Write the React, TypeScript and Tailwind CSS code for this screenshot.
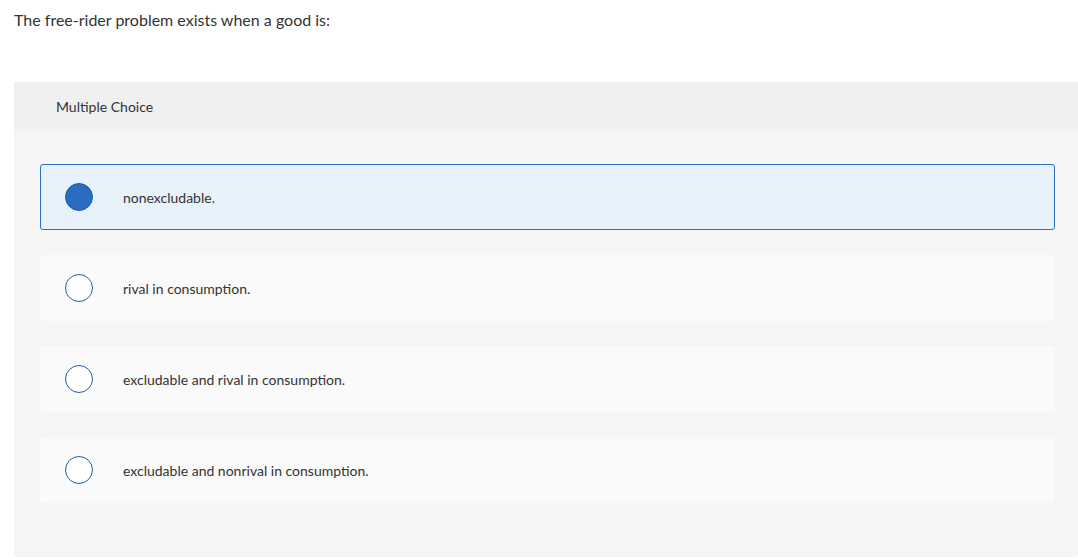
const options = [
  'nonexcludable.',
  'rival in consumption.',
  'excludable and rival in consumption.',
  'excludable and nonrival in consumption.',
]

export default function App() {
  const selected = 0
  return (
    <div className="min-h-[560px] bg-white text-[#333] font-['Lato','Open_Sans',sans-serif]">
      <p className="px-[14px] pt-[10px] text-[16px] leading-[20px]">
        The free-rider problem exists when a good is:
      </p>
      <div className="ml-[14px] mt-[52px] rounded-b-[3px] bg-[#f5f5f5]">
        <div className="flex h-[49px] items-center bg-[#f0f0f0] px-[42px] text-[14px]">
          Multiple Choice
        </div>
        <div className="flex flex-col gap-[25px] pb-[54px] pl-[26px] pr-[23px] pt-[33px]">
          {options.map((o, i) => (
            <div
              key={o}
              className={
                i === selected
                  ? 'flex h-[66px] items-center rounded-[3px] border border-[#2f6fc7] bg-[#e8f2fb] pl-[24px]'
                  : 'flex h-[66px] items-center rounded-[3px] border border-transparent bg-[#fafafa] pl-[24px]'
              }
            >
              <span
                className={
                  i === selected
                    ? 'h-[28px] w-[28px] shrink-0 rounded-full border border-[#1f5da8] bg-[#2b6cc0]'
                    : 'h-[28px] w-[28px] shrink-0 rounded-full border-[1.5px] border-[#1f5da8] bg-white'
                }
              />
              <span className="ml-[30px] text-[14px]">{o}</span>
            </div>
          ))}
        </div>
      </div>
    </div>
  )
}
